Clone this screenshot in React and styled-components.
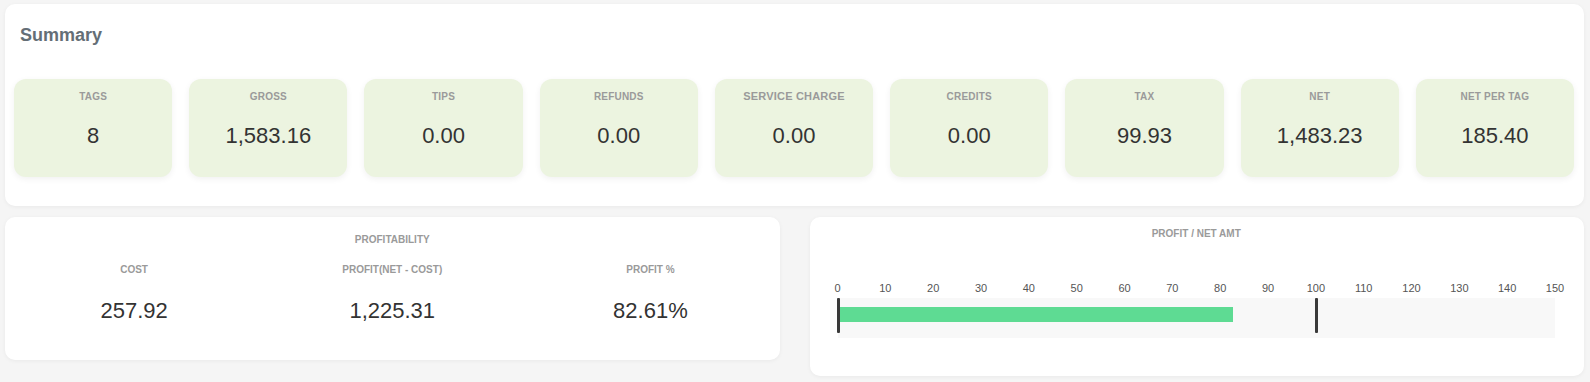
import styled, { createGlobalStyle } from "styled-components";

const GlobalStyle = createGlobalStyle`
  * { box-sizing: border-box; }
  body {
    margin: 0;
    background: #f5f5f5;
    font-family: "Liberation Sans", Arial, sans-serif;
  }
`;

const summary = [
  { label: "TAGS", value: "8" },
  { label: "GROSS", value: "1,583.16" },
  { label: "TIPS", value: "0.00" },
  { label: "REFUNDS", value: "0.00" },
  { label: "SERVICE CHARGE", value: "0.00", wide: true },
  { label: "CREDITS", value: "0.00" },
  { label: "TAX", value: "99.93" },
  { label: "NET", value: "1,483.23" },
  { label: "NET PER TAG", value: "185.40" },
];

const profit = [
  { label: "COST", value: "257.92" },
  { label: "PROFIT(NET - COST)", value: "1,225.31" },
  { label: "PROFIT %", value: "82.61%" },
];

const MAX = 150;
const ticks = Array.from({ length: 16 }, (_, i) => i * 10);
const pct = (v) => `${(v / MAX) * 100}%`;

const App = () => {
  return (
    <Page>
      <GlobalStyle />
      <SummaryCard>
        <Title>Summary</Title>
        <Tiles>
          {summary.map((s) => (
            <Tile key={s.label}>
              <TileLabel $wide={s.wide}>{s.label}</TileLabel>
              <TileValue>{s.value}</TileValue>
            </Tile>
          ))}
        </Tiles>
      </SummaryCard>

      <BottomRow>
        <ProfitCard>
          <SmallHead>PROFITABILITY</SmallHead>
          <Columns>
            {profit.map((p) => (
              <Column key={p.label}>
                <SmallHead>{p.label}</SmallHead>
                <BigValue>{p.value}</BigValue>
              </Column>
            ))}
          </Columns>
        </ProfitCard>

        <ChartCard>
          <SmallHead>PROFIT / NET AMT</SmallHead>
          <Chart>
            <Axis>
              {ticks.map((t) => (
                <Tick key={t} style={{ left: pct(t) }}>
                  {t}
                </Tick>
              ))}
            </Axis>
            <Track>
              <Bar style={{ width: pct(82.61) }} />
              <Marker style={{ left: pct(0) }} />
              <Marker style={{ left: pct(100) }} />
            </Track>
          </Chart>
        </ChartCard>
      </BottomRow>
    </Page>
  );
};

const Page = styled.div`
  padding: 4px 6px 6px 5px;
  display: flex;
  flex-direction: column;
  gap: 11px;
`;

const Card = styled.div`
  background: #ffffff;
  border-radius: 10px;
  box-shadow: 0 1px 4px rgba(0, 0, 0, 0.05);
`;

const SummaryCard = styled(Card)`
  padding: 20px 10px 29px 9px;
`;

const Title = styled.h2`
  margin: 0 0 33px 6px;
  font-size: 18px;
  line-height: 22px;
  font-weight: 700;
  color: #646e76;
`;

const Tiles = styled.div`
  display: grid;
  grid-template-columns: repeat(9, 1fr);
  gap: 17px;
`;

const Tile = styled.div`
  height: 98px;
  background: #ecf4e0;
  border-radius: 12px;
  box-shadow: 0 2px 6px rgba(0, 0, 0, 0.06);
  padding-top: 11px;
  display: flex;
  flex-direction: column;
  align-items: center;
  gap: 20px;
`;

const TileLabel = styled.div`
  font-size: ${(p) => (p.$wide ? "11px" : "10px")};
  line-height: 13px;
  font-weight: 700;
  letter-spacing: 0.2px;
  color: #9a9a9a;
`;

const TileValue = styled.div`
  font-size: 22px;
  line-height: 26px;
  color: #333333;
`;

const BottomRow = styled.div`
  display: grid;
  grid-template-columns: 1fr 1fr;
  align-items: start;
  gap: 30px;
`;

const ProfitCard = styled(Card)`
  height: 143px;
  padding-top: 17px;
  display: flex;
  flex-direction: column;
  align-items: center;
`;

const SmallHead = styled.div`
  font-size: 10px;
  line-height: 12px;
  font-weight: 700;
  color: #9a9a9a;
  text-align: center;
`;

const Columns = styled.div`
  width: 100%;
  margin-top: 18px;
  display: grid;
  grid-template-columns: repeat(3, 1fr);
`;

const Column = styled.div`
  display: flex;
  flex-direction: column;
  align-items: center;
  gap: 22px;
`;

const BigValue = styled.div`
  font-size: 22px;
  line-height: 26px;
  color: #333333;
`;

const ChartCard = styled(Card)`
  min-width: 0;
  height: 159px;
  padding: 11px 29px 0 28px;
`;

const Chart = styled.div`
  margin-top: 41px;
`;

const Axis = styled.div`
  position: relative;
  height: 14px;
  margin-bottom: 3px;
`;

const Tick = styled.span`
  position: absolute;
  top: 0;
  transform: translateX(-50%);
  font-size: 11px;
  line-height: 14px;
  color: #555555;
  white-space: nowrap;
`;

const Track = styled.div`
  position: relative;
  height: 40px;
  background: #f8f8f8;
`;

const Bar = styled.div`
  position: absolute;
  left: 0;
  top: 9px;
  height: 15px;
  background: #5edb93;
`;

const Marker = styled.div`
  position: absolute;
  top: 0;
  width: 3px;
  height: 35px;
  margin-left: -1px;
  background: #3a3a3a;
  border-radius: 1px;
`;

export default App;
